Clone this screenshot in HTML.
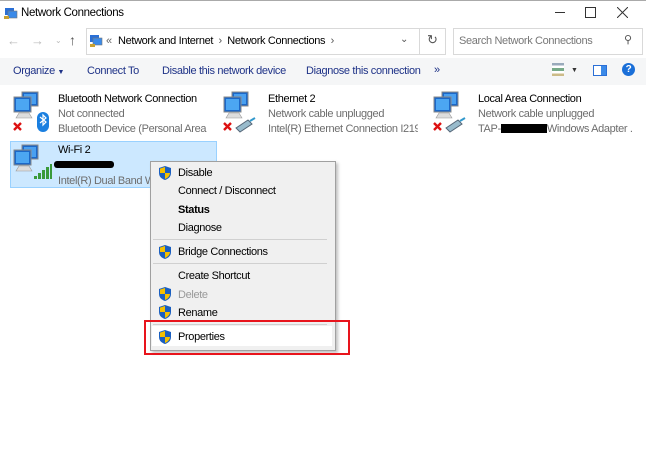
<!DOCTYPE html><html><head><style>
body{margin:0;width:646px;height:470px;background:#fff;font-family:"Liberation Sans",sans-serif;font-size:11px;letter-spacing:-0.35px;color:#000;position:relative;overflow:hidden}
.a{position:absolute;white-space:nowrap}
.g{color:#6d6d6d}
.t{overflow:hidden;width:150px}
.sep{position:absolute;left:153px;width:174px;height:1px;background:#d0d0d0}
</style></head><body>
<div class="a" style="left:0;top:0;width:646px;height:1px;background:#aaa"></div>
<svg class="a" style="left:4px;top:6px" width="14" height="14"><rect x="1" y="2" width="9" height="7" fill="#2a6fd6"/><rect x="4" y="5" width="9" height="7" fill="#3b8ae8" stroke="#777" stroke-width=".6"/><rect x="0" y="10" width="5" height="3" fill="#c8a030"/></svg>
<div class="a" style="left:21px;top:7px;font-size:11.5px">Network Connections</div>
<div class="a" style="left:555px;top:12px;width:10px;height:1px;background:#333"></div>
<div class="a" style="left:585px;top:7px;width:9px;height:9px;border:1px solid #333"></div>
<svg class="a" style="left:617px;top:7px" width="11" height="11"><path d="M0 0L11 11M11 0L0 11" stroke="#333" stroke-width="1"/></svg>
<div class="a" style="left:7px;top:33px;color:#bbb;font-size:13px">←</div>
<div class="a" style="left:31px;top:33px;color:#bbb;font-size:13px">→</div>
<div class="a" style="left:55px;top:36px;color:#bbb;font-size:8px">⌄</div>
<div class="a" style="left:69px;top:32px;color:#555;font-size:14px">↑</div>
<div class="a" style="left:86px;top:28px;width:358px;height:25px;border:1px solid #d9d9d9"></div>
<div class="a" style="left:419px;top:28px;width:1px;height:26px;background:#d9d9d9"></div>
<svg class="a" style="left:89px;top:34px" width="14" height="14"><rect x="1" y="1" width="9" height="7" fill="#2a6fd6"/><rect x="4" y="4" width="9" height="7" fill="#3b8ae8" stroke="#777" stroke-width=".6"/><rect x="1" y="10" width="5" height="3" fill="#c8a030"/></svg>
<div class="a" style="left:106px;top:35px;color:#666">«</div>
<div class="a" style="left:118px;top:35px">Network and Internet&nbsp; <span style="color:#555">›</span>&nbsp; Network Connections&nbsp; <span style="color:#555">›</span></div>
<div class="a" style="left:400px;top:34px;color:#555;font-size:10px">⌄</div>
<div class="a" style="left:427px;top:32px;color:#555;font-size:13px">↻</div>
<div class="a" style="left:453px;top:28px;width:188px;height:25px;border:1px solid #d9d9d9"></div>
<div class="a g" style="left:459px;top:35px;color:#777">Search Network Connections</div>
<div class="a" style="left:624px;top:33px;color:#555;font-size:11px">⚲</div>
<div class="a" style="left:0;top:58px;width:646px;height:27px;background:#f5f6f7"></div>
<div class="a" style="left:13px;top:65px;color:#1e3287">Organize <span style="font-size:7px">▼</span></div>
<div class="a" style="left:87px;top:65px;color:#1e3287">Connect To</div>
<div class="a" style="left:162px;top:65px;color:#1e3287">Disable this network device</div>
<div class="a" style="left:306px;top:65px;color:#1e3287">Diagnose this connection</div>
<div class="a" style="left:434px;top:64px;color:#1e3287">»</div>
<div class="a" style="left:552px;top:63px;width:12px;height:13px;background:linear-gradient(#9ab 0 20%,#fff 20% 40%,#7a8 40% 60%,#fff 60% 80%,#cb8 80%)"></div>
<div class="a" style="left:571px;top:67px;font-size:7px;color:#333">▼</div>
<div class="a" style="left:593px;top:65px;width:12px;height:9px;border:1px solid #2a6fd6;background:linear-gradient(90deg,#fff 60%,#3b8ae8 60%)"></div>
<div class="a" style="left:622px;top:63px;width:13px;height:13px;border-radius:50%;background:#1a6fd8;color:#fff;font-size:10px;font-weight:bold;text-align:center;line-height:13px">?</div>

<div class="a" style="left:10px;top:141px;width:205px;height:45px;background:#cce8ff;border:1px solid #99d1ff"></div>

<svg width="0" height="0" style="position:absolute"><defs><g id="pc"><rect x="10" y="2" width="16" height="14" fill="#1c68c8" stroke="#888"/><rect x="12" y="4" width="12" height="10" fill="#4aa0f0"/><rect x="2" y="7" width="17" height="15" fill="#1c68c8" stroke="#888"/><rect x="4" y="9" width="13" height="11" fill="#4ca6f2"/><path d="M7 23h10l3 5H4z" fill="#ddd" stroke="#999" stroke-width=".6"/></g></defs></svg>

<svg class="a" style="left:12px;top:90px" width="40" height="44"><use href="#pc"/><path d="M2 33l7 7M9 33l-7 7" stroke="#d11" stroke-width="2.4"/><rect x="25" y="22" width="12" height="20" rx="6" fill="#1a7fe0"/><path d="M28 27l6 5-3 3V25l3 3-6 5" stroke="#fff" fill="none" stroke-width="1.2"/></svg>
<div class="a" style="left:58px;top:93px">Bluetooth Network Connection</div>
<div class="a g" style="left:58px;top:108px">Not connected</div>
<div class="a g t" style="left:58px;top:123px">Bluetooth Device (Personal Area ...</div>

<svg class="a" style="left:222px;top:90px" width="40" height="44"><use href="#pc"/><path d="M2 33l7 7M9 33l-7 7" stroke="#d11" stroke-width="2.4"/><path d="M14 38l12-8 4 4-12 8z" fill="#9bc" stroke="#567"/><path d="M28 31l5-3" stroke="#39c" stroke-width="2"/></svg>
<div class="a" style="left:268px;top:93px">Ethernet 2</div>
<div class="a g" style="left:268px;top:108px">Network cable unplugged</div>
<div class="a g t" style="left:268px;top:123px">Intel(R) Ethernet Connection I219-...</div>

<svg class="a" style="left:432px;top:90px" width="40" height="44"><use href="#pc"/><path d="M2 33l7 7M9 33l-7 7" stroke="#d11" stroke-width="2.4"/><path d="M14 38l12-8 4 4-12 8z" fill="#9bc" stroke="#567"/><path d="M28 31l5-3" stroke="#39c" stroke-width="2"/></svg>
<div class="a" style="left:478px;top:93px">Local Area Connection</div>
<div class="a g" style="left:478px;top:108px">Network cable unplugged</div>
<div class="a g t" style="left:478px;top:123px;width:155px">TAP-<span style="display:inline-block;width:46px;height:9px;background:#000;vertical-align:-1px"></span>Windows Adapter ...</div>

<svg class="a" style="left:12px;top:143px" width="40" height="40"><use href="#pc"/><path d="M22 36h3v-3h-3zM26 36h3v-6h-3zM30 36h3v-9h-3zM34 36h3v-12h-3zM38 36h2V21h-2z" fill="#3a9a3a"/></svg>
<div class="a" style="left:58px;top:144px">Wi-Fi 2</div>
<div class="a" style="left:54px;top:161px;width:60px;height:7px;background:#000;border-radius:3px"></div>
<div class="a g" style="left:58px;top:175px">Intel(R) Dual Band Wi</div>

<div class="a" style="left:150px;top:161px;width:184px;height:188px;background:#f0f0f0;border:1px solid #a0a0a0;box-shadow:2px 2px 3px rgba(0,0,0,.25)"></div>
<svg width="0" height="0" style="position:absolute"><defs><g id="sh"><path d="M6 0L12 2v5c0 4-3 6-6 7-3-1-6-3-6-7V2z" fill="#1a5fc0"/><path d="M6 1v6H1V2.6zM6 7h5c-.3 3-2.5 5-5 6z" fill="#f5c000"/></g></defs></svg>
<svg class="a" style="left:159px;top:166px" width="13" height="14"><use href="#sh"/></svg>
<div class="a" style="left:178px;top:167px">Disable</div>
<div class="a" style="left:178px;top:185px">Connect / Disconnect</div>
<div class="a" style="left:178px;top:204px;font-weight:bold">Status</div>
<div class="a" style="left:178px;top:222px">Diagnose</div>
<div class="sep" style="top:239px"></div>
<svg class="a" style="left:159px;top:245px" width="13" height="14"><use href="#sh"/></svg>
<div class="a" style="left:178px;top:246px">Bridge Connections</div>
<div class="sep" style="top:263px"></div>
<div class="a" style="left:178px;top:270px">Create Shortcut</div>
<svg class="a" style="left:159px;top:287px" width="13" height="14"><use href="#sh"/></svg>
<div class="a" style="left:178px;top:289px;color:#999">Delete</div>
<svg class="a" style="left:159px;top:305px" width="13" height="14"><use href="#sh"/></svg>
<div class="a" style="left:178px;top:307px">Rename</div>
<div class="sep" style="top:324px"></div>
<div class="a" style="left:152px;top:326px;width:180px;height:20px;background:#fff"></div>
<svg class="a" style="left:159px;top:330px" width="13" height="14"><use href="#sh"/></svg>
<div class="a" style="left:178px;top:331px">Properties</div>
<div class="a" style="left:144px;top:320px;width:202px;height:31px;border:2px solid #e8141c"></div>
</body></html>
